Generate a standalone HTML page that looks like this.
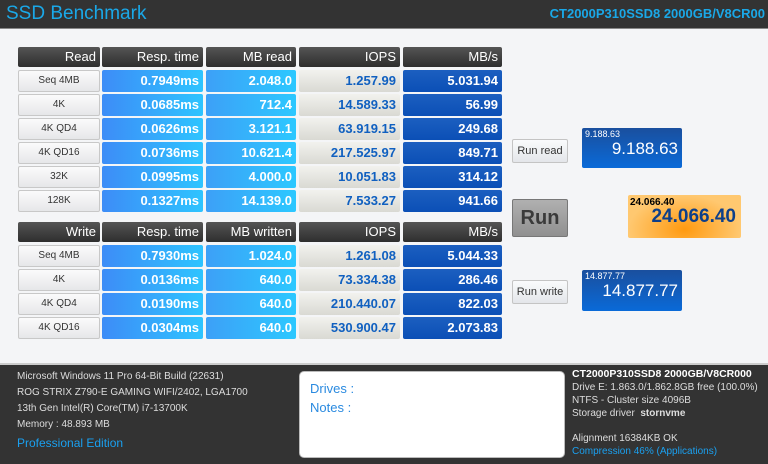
<!DOCTYPE html>
<html><head><meta charset="utf-8"><style>
*{margin:0;padding:0;box-sizing:border-box}
body{width:768px;height:464px;overflow:hidden;background:#f4f5f7;font-family:"Liberation Sans",sans-serif;position:relative}
.hdr{position:absolute;left:0;top:0;width:768px;height:29px;background:#333;border-bottom:1px solid #888}
.title{position:absolute;left:6px;top:3px;color:#1aa8e8;font-size:19px}
.model{position:absolute;right:3px;top:6px;color:#1aa8e8;font-size:13px;font-weight:bold}
.row{position:absolute;left:18px;height:22px}
.c{position:absolute;top:0;height:100%;text-align:right;padding-right:4px;font-size:13px;line-height:22px;border-radius:2px}
.h .c{background:linear-gradient(#555,#2e2e2e);color:#fff;font-size:13px;line-height:20px}
.lab{background:linear-gradient(#fbfbfb,#e6e7e9);border:1px solid #c8c8c8;color:#333;font-size:10px;text-align:center!important;padding:0!important;line-height:20px!important}
.rt{background:linear-gradient(90deg,#3d8cf7,#2ec4ff);color:#fff;font-weight:bold}
.mb{background:linear-gradient(90deg,#3da0f7,#2cc8ff);color:#fff;font-weight:bold}
.io{background:linear-gradient(#f2f2ee,#d9d9d3);color:#1060c0;font-weight:bold}
.ms{background:linear-gradient(#1c5fc0,#0b4fb6);color:#fff;font-weight:bold}
.btn{position:absolute;background:linear-gradient(#fafbfc,#e4e6ea);border:1px solid #c4c4c4;border-radius:2px;font-size:11px;color:#333;text-align:center}
.res{position:absolute;background:linear-gradient(#1a4f9e,#0a6ad8);border-radius:2px;color:#fff}
.bot{position:absolute;left:0;top:363px;width:768px;height:101px;background:#333;border-top:2px solid #ccc}
.sys{position:absolute;left:17px;color:#ddd;font-size:10px}
.inf{position:absolute;left:572px;color:#ddd;font-size:10px}
</style></head><body>
<div class="hdr"><div class="title">SSD Benchmark</div><div class="model">CT2000P310SSD8 2000GB/V8CR00</div></div>

<div class="row h" style="top:47px;height:20px"><div class="c" style="left:0;width:82px">Read</div><div class="c" style="left:84px;width:101px">Resp. time</div><div class="c" style="left:188px;width:90px">MB read</div><div class="c" style="left:281px;width:101px">IOPS</div><div class="c" style="left:385px;width:99px">MB/s</div></div>

<div class="row" style="top:70px"><div class="c lab" style="left:0;width:82px">Seq 4MB</div><div class="c rt" style="left:84px;width:101px">0.7949ms</div><div class="c mb" style="left:188px;width:90px">2.048.0</div><div class="c io" style="left:281px;width:101px">1.257.99</div><div class="c ms" style="left:385px;width:99px">5.031.94</div></div>
<div class="row" style="top:94px"><div class="c lab" style="left:0;width:82px">4K</div><div class="c rt" style="left:84px;width:101px">0.0685ms</div><div class="c mb" style="left:188px;width:90px">712.4</div><div class="c io" style="left:281px;width:101px">14.589.33</div><div class="c ms" style="left:385px;width:99px">56.99</div></div>
<div class="row" style="top:118px"><div class="c lab" style="left:0;width:82px">4K QD4</div><div class="c rt" style="left:84px;width:101px">0.0626ms</div><div class="c mb" style="left:188px;width:90px">3.121.1</div><div class="c io" style="left:281px;width:101px">63.919.15</div><div class="c ms" style="left:385px;width:99px">249.68</div></div>
<div class="row" style="top:142px"><div class="c lab" style="left:0;width:82px">4K QD16</div><div class="c rt" style="left:84px;width:101px">0.0736ms</div><div class="c mb" style="left:188px;width:90px">10.621.4</div><div class="c io" style="left:281px;width:101px">217.525.97</div><div class="c ms" style="left:385px;width:99px">849.71</div></div>
<div class="row" style="top:166px"><div class="c lab" style="left:0;width:82px">32K</div><div class="c rt" style="left:84px;width:101px">0.0995ms</div><div class="c mb" style="left:188px;width:90px">4.000.0</div><div class="c io" style="left:281px;width:101px">10.051.83</div><div class="c ms" style="left:385px;width:99px">314.12</div></div>
<div class="row" style="top:190px"><div class="c lab" style="left:0;width:82px">128K</div><div class="c rt" style="left:84px;width:101px">0.1327ms</div><div class="c mb" style="left:188px;width:90px">14.139.0</div><div class="c io" style="left:281px;width:101px">7.533.27</div><div class="c ms" style="left:385px;width:99px">941.66</div></div>

<div class="row h" style="top:222px;height:20px"><div class="c" style="left:0;width:82px">Write</div><div class="c" style="left:84px;width:101px">Resp. time</div><div class="c" style="left:188px;width:90px">MB written</div><div class="c" style="left:281px;width:101px">IOPS</div><div class="c" style="left:385px;width:99px">MB/s</div></div>
<div class="row" style="top:245px"><div class="c lab" style="left:0;width:82px">Seq 4MB</div><div class="c rt" style="left:84px;width:101px">0.7930ms</div><div class="c mb" style="left:188px;width:90px">1.024.0</div><div class="c io" style="left:281px;width:101px">1.261.08</div><div class="c ms" style="left:385px;width:99px">5.044.33</div></div>
<div class="row" style="top:269px"><div class="c lab" style="left:0;width:82px">4K</div><div class="c rt" style="left:84px;width:101px">0.0136ms</div><div class="c mb" style="left:188px;width:90px">640.0</div><div class="c io" style="left:281px;width:101px">73.334.38</div><div class="c ms" style="left:385px;width:99px">286.46</div></div>
<div class="row" style="top:293px"><div class="c lab" style="left:0;width:82px">4K QD4</div><div class="c rt" style="left:84px;width:101px">0.0190ms</div><div class="c mb" style="left:188px;width:90px">640.0</div><div class="c io" style="left:281px;width:101px">210.440.07</div><div class="c ms" style="left:385px;width:99px">822.03</div></div>
<div class="row" style="top:317px"><div class="c lab" style="left:0;width:82px">4K QD16</div><div class="c rt" style="left:84px;width:101px">0.0304ms</div><div class="c mb" style="left:188px;width:90px">640.0</div><div class="c io" style="left:281px;width:101px">530.900.47</div><div class="c ms" style="left:385px;width:99px">2.073.83</div></div>

<div class="btn" style="left:512px;top:139px;width:56px;height:24px;line-height:22px">Run read</div>
<div class="btn" style="left:512px;top:199px;width:56px;height:38px;line-height:36px;background:linear-gradient(#b0b0b0,#909090);border-color:#777;font-size:20px;font-weight:bold;color:#3a3a3a">Run</div>
<div class="btn" style="left:512px;top:280px;width:56px;height:24px;line-height:22px">Run write</div>

<div class="res" style="left:582px;top:128px;width:100px;height:40px"><div style="position:absolute;left:3px;top:1px;font-size:9px">9.188.63</div><div style="position:absolute;right:4px;top:11px;font-size:17px">9.188.63</div></div>
<div class="res" style="left:582px;top:270px;width:100px;height:41px"><div style="position:absolute;left:3px;top:1px;font-size:9px">14.877.77</div><div style="position:absolute;right:4px;top:11px;font-size:17px">14.877.77</div></div>
<div class="res" style="left:628px;top:195px;width:113px;height:43px;background:radial-gradient(ellipse at 50% 80%,#ff9a10,#ffc870 70%);color:#000"><div style="position:absolute;left:2px;top:2px;font-size:10px;font-weight:bold">24.066.40</div><div style="position:absolute;right:5px;top:11px;font-size:19px;font-weight:bold;color:#0d3f8a">24.066.40</div></div>

<div class="bot"></div>
<div class="sys" style="top:371px">Microsoft Windows 11 Pro 64-Bit Build (22631)</div>
<div class="sys" style="top:387px">ROG STRIX Z790-E GAMING WIFI/2402, LGA1700</div>
<div class="sys" style="top:403px">13th Gen Intel(R) Core(TM) i7-13700K</div>
<div class="sys" style="top:419px">Memory : 48.893 MB</div>
<div class="sys" style="top:436px;color:#1aa0f0;font-size:12px">Professional Edition</div>
<div style="position:absolute;left:299px;top:371px;width:266px;height:87px;background:#fff;border-radius:5px;border:1px solid #bbb"><div style="position:absolute;left:10px;top:9px;color:#2a8ae0;font-size:13px">Drives :</div><div style="position:absolute;left:10px;top:28px;color:#2a8ae0;font-size:13px">Notes :</div></div>
<div class="inf" style="top:368px;color:#fff;font-weight:bold;font-size:10.5px">CT2000P310SSD8 2000GB/V8CR000</div>
<div class="inf" style="top:382px">Drive E: 1.863.0/1.862.8GB free (100.0%)</div>
<div class="inf" style="top:395px">NTFS - Cluster size 4096B</div>
<div class="inf" style="top:408px">Storage driver &nbsp;<b>stornvme</b></div>
<div class="inf" style="top:433px">Alignment 16384KB OK</div>
<div class="inf" style="top:446px;color:#1aa0f0">Compression 46% (Applications)</div>
</body></html>
